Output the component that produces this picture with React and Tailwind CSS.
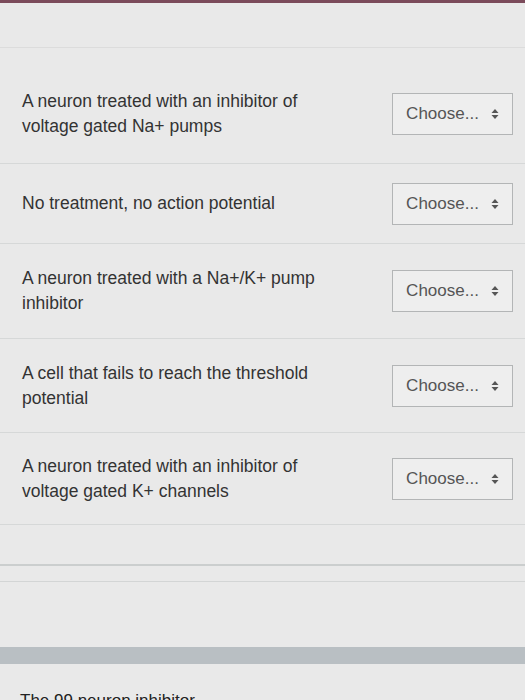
import React from "react";

const rows = [
  { label: ["A neuron treated with an inhibitor of", "voltage gated Na+ pumps"], h: "h-[116px]", pad: "pt-4" },
  { label: ["No treatment, no action potential"], h: "h-[80px]", pad: "" },
  { label: ["A neuron treated with a Na+/K+ pump", "inhibitor"], h: "h-[95px]", pad: "" },
  { label: ["A cell that fails to reach the threshold", "potential"], h: "h-[94px]", pad: "" },
  { label: ["A neuron treated with an inhibitor of", "voltage gated K+ channels"], h: "h-[92px]", pad: "" },
];

// little up/down arrows used by the native select
const Arrows = () => (
  <svg width="8" height="12" viewBox="0 0 8 12" className="ml-3">
    <path d="M4 1 L7.5 5 L0.5 5 Z" fill="#555" />
    <path d="M4 11 L7.5 7 L0.5 7 Z" fill="#555" />
  </svg>
);

const Choose = () => (
  <div className="w-[121px] h-[42px] border border-[#b3b5b6] bg-[#eeeeee] flex items-center justify-center text-[17px] text-[#555]">
    Choose...
    <Arrows />
  </div>
);

const App = () => {
  return (
    <div
      className="w-[525px] h-[700px] overflow-hidden bg-[#e9e9e9] text-[#333]"
      style={{ fontFamily: '"Liberation Sans", Arial, sans-serif' }}
    >
      {/* top bar */}
      <div className="h-[3px] bg-[#7b4b5b]" />
      <div className="h-[44px]" />

      {/* questions */}
      <div className="border-t border-[#dcdcdc]">
        {rows.map((row, i) => (
          <div
            key={i}
            className={`${row.h} ${row.pad} flex items-center justify-between pl-[22px] pr-3 border-b border-[#d6d8d8]`}
          >
            <div className="text-[17.5px] leading-[25px]">
              {row.label.map((line) => (
                <div key={line}>{line}</div>
              ))}
            </div>
            <Choose />
          </div>
        ))}
      </div>

      <div className="h-[39px]" />
      <div className="h-[2px] bg-[#cbcece]" />
      <div className="h-[15px]" />
      <div className="h-px bg-[#d3d5d5]" />

      <div className="h-[65px]" />
      <div className="h-[17px] bg-[#b9bfc3]" />

      <div className="pt-[24px] pl-5 text-[17px] text-[#222]">
        The 99 neuron inhibitor
      </div>
    </div>
  );
};

export default App;
